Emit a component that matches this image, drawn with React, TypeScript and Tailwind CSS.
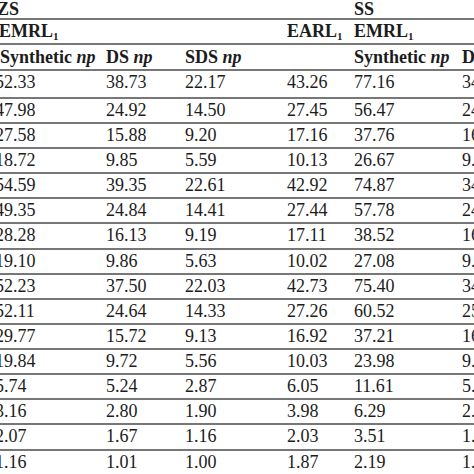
import React from "react";

const GRID =
  "grid grid-cols-[111px_79px_102px_67px_108px_100px] items-center border-b-2 border-[#777]";

const Sub = () => <sub className="text-[11px]">1</sub>;
const NP = ({ label }: { label: string }) => (
  <span>
    {label} <i>np</i>
  </span>
);

const data: string[][] = [
  ["52.33", "38.73", "22.17", "43.26", "77.16", "34.12"],
  ["47.98", "24.92", "14.50", "27.45", "56.47", "24.87"],
  ["27.58", "15.88", "9.20", "17.16", "37.76", "16.65"],
  ["18.72", "9.85", "5.59", "10.13", "26.67", "9.87"],
  ["54.59", "39.35", "22.61", "42.92", "74.87", "34.56"],
  ["49.35", "24.84", "14.41", "27.44", "57.78", "24.91"],
  ["28.28", "16.13", "9.19", "17.11", "38.52", "16.43"],
  ["19.10", "9.86", "5.63", "10.02", "27.08", "9.95"],
  ["52.23", "37.50", "22.03", "42.73", "75.40", "34.02"],
  ["52.11", "24.64", "14.33", "27.26", "60.52", "25.11"],
  ["29.77", "15.72", "9.13", "16.92", "37.21", "16.28"],
  ["19.84", "9.72", "5.56", "10.03", "23.98", "9.88"],
  ["5.74", "5.24", "2.87", "6.05", "11.61", "5.31"],
  ["3.16", "2.80", "1.90", "3.98", "6.29", "2.83"],
  ["2.07", "1.67", "1.16", "2.03", "3.51", "1.69"],
  ["1.16", "1.01", "1.00", "1.87", "2.19", "1.02"],
];

export default function App() {
  return (
    <div
      className="w-[474px] h-[474px] overflow-hidden bg-white text-[#1c1c1c] text-[18px] leading-[22px]"
      style={{ fontFamily: '"Liberation Serif", "Times New Roman", serif' }}
    >
      <div className="ml-[-5px] mt-[-5px] w-[567px]">
        <div className={`${GRID} h-[25px] font-bold`}>
          <div className="pl-[2px] pt-[3px]">ZS</div>
          <div />
          <div />
          <div />
          <div className="pt-[3px]">SS</div>
          <div />
        </div>
        <div className={`${GRID} h-[24.5px] font-bold`}>
          <div className="pl-[4px]">
            EMRL<Sub />
          </div>
          <div />
          <div />
          <div>
            EARL<Sub />
          </div>
          <div>
            EMRL<Sub />
          </div>
          <div />
        </div>
        <div className={`${GRID} h-[26.5px] font-bold`}>
          <div className="pl-[5px]">
            <NP label="Synthetic" />
          </div>
          <div>
            <NP label="DS" />
          </div>
          <div>
            <NP label="SDS" />
          </div>
          <div />
          <div>
            <NP label="Synthetic" />
          </div>
          <div>
            <NP label="DS" />
          </div>
        </div>
        {data.map((row, i) => (
          <div
            key={i}
            className={`${GRID} ${i === 0 ? "h-[27.8px]" : "h-[25.14px]"}`}
          >
            {row.map((v, j) => (
              <div key={j} className="pb-[3px]">
                {v}
              </div>
            ))}
          </div>
        ))}
      </div>
    </div>
  );
}
